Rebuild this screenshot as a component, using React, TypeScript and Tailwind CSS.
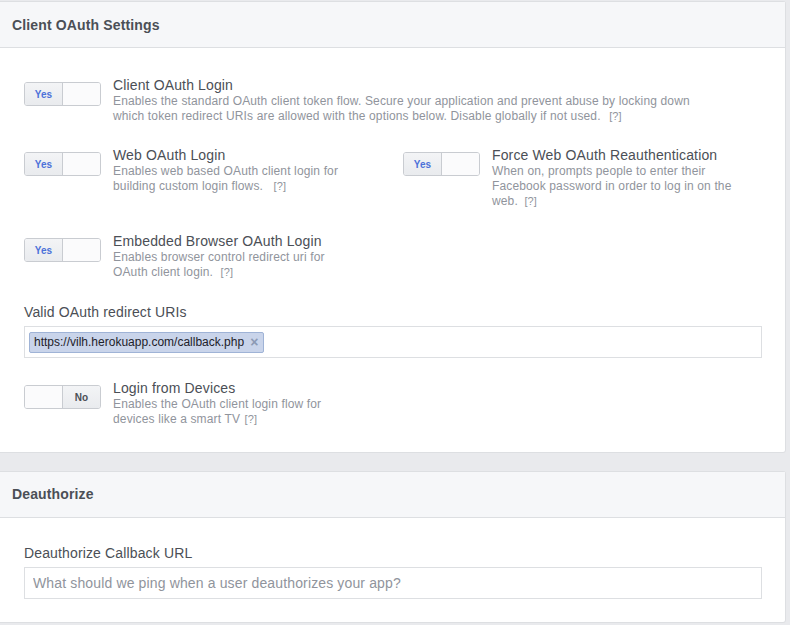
const Toggle = ({ on }: { on: boolean }) => (
  <div className="mt-[6px] flex h-[24px] w-[77px] shrink-0 overflow-hidden rounded-[3px] border border-[#c9ccd1] bg-white">
    <div
      className={`flex w-[38px] items-center justify-center border-r border-[#c9ccd1] text-[10px] font-bold ${
        on ? "bg-gradient-to-b from-[#f3f4f6] to-[#e9ebee] text-[#4c72d9]" : "bg-[#fbfbfc]"
      }`}
    >
      {on ? "Yes" : ""}
    </div>
    <div
      className={`flex flex-1 items-center justify-center text-[10px] font-bold ${
        on ? "bg-[#fbfbfc]" : "bg-gradient-to-b from-[#f3f4f6] to-[#e9ebee] text-[#4b4f56]"
      }`}
    >
      {on ? "" : "No"}
    </div>
  </div>
);

type SettingProps = {
  on: boolean;
  title: string;
  desc: string;
  width: string;
  help: string;
  className?: string;
};

const Setting = ({ on, title, desc, width, help, className = "" }: SettingProps) => (
  <div className={`flex gap-[12px] ${className}`}>
    <Toggle on={on} />
    <div>
      <div className="text-[14px] leading-[18px] text-[#4b4f56]">{title}</div>
      <div className={`text-[12px] leading-[15px] text-[#90949c] ${width}`}>
        {desc} <span className={`text-[11px] ${help}`}>[?]</span>
      </div>
    </div>
  </div>
);

const App = () => {
  return (
    <div className="h-[625px] w-[790px] overflow-hidden bg-[#e9eaed] pt-[1px] font-['Liberation_Sans',Arial,sans-serif] tracking-[0.14px]">
      <div className="w-[786px] rounded-r-[3px] border border-l-0 border-[#dddfe2] bg-white">
        <div className="flex h-[46px] items-center border-b border-[#dddfe2] bg-[#f6f7f9] px-[12px] pt-[1px] text-[14px] font-bold text-[#4b4f56]">
          Client OAuth Settings
        </div>
        <div className="flex flex-col pb-[25px] pl-[24px] pr-[23px] pt-[28px]">
          <Setting
            on
            title="Client OAuth Login"
            desc="Enables the standard OAuth client token flow. Secure your application and prevent abuse by locking down which token redirect URIs are allowed with the options below. Disable globally if not used."
            width="max-w-[595px]"
            help="ml-[5px]"
          />
          <div className="mt-[22px] grid grid-cols-[379px_1fr]">
            <Setting
              on
              title="Web OAuth Login"
              desc="Enables web based OAuth client login for building custom login flows."
              width="max-w-[244px]"
              help="ml-[7px]"
            />
            <Setting
              on
              title="Force Web OAuth Reauthentication"
              desc="When on, prompts people to enter their Facebook password in order to log in on the web."
              width="max-w-[244px]"
              help="ml-[3px]"
            />
          </div>
          <Setting
            on
            className="mt-[23px]"
            title="Embedded Browser OAuth Login"
            desc="Enables browser control redirect uri for OAuth client login."
            width="max-w-[244px]"
            help="ml-[4px]"
          />
          <div className="mt-[23px]">
            <div className="mb-[5px] text-[14px] leading-[18px] text-[#4b4f56]">Valid OAuth redirect URIs</div>
            <div className="flex h-[32px] items-center border border-[#dddfe2] px-[4px]">
              <div className="flex h-[21px] items-center gap-[6px] rounded-[2px] border border-[#9fb3d6] bg-[#c9d4ea] pl-[4px] pr-[5px] text-[12px] tracking-normal text-[#1d2129]">
                https://vilh.herokuapp.com/callback.php
                <span className="text-[14px] font-bold leading-none text-[#8c9ab4]">×</span>
              </div>
            </div>
          </div>
          <Setting
            on={false}
            className="mt-[21px]"
            title="Login from Devices"
            desc="Enables the OAuth client login flow for devices like a smart TV"
            width="max-w-[244px]"
            help="ml-[1px]"
          />
        </div>
      </div>

      <div className="mt-[18px] w-[786px] rounded-r-[3px] border border-l-0 border-[#dddfe2] bg-white">
        <div className="flex h-[46px] items-center border-b border-[#dddfe2] bg-[#f6f7f9] px-[12px] text-[14px] font-bold text-[#4b4f56]">
          Deauthorize
        </div>
        <div className="pb-[23px] pl-[24px] pr-[23px] pt-[26px]">
          <div className="mb-[5px] text-[14px] leading-[18px] text-[#4b4f56]">Deauthorize Callback URL</div>
          <input
            className="h-[32px] w-full border border-[#dddfe2] px-[8px] text-[14px] tracking-[0.14px] text-[#4b4f56] outline-none placeholder:text-[#90949c]"
            placeholder="What should we ping when a user deauthorizes your app?"
          />
        </div>
      </div>
    </div>
  );
};

export default App;
